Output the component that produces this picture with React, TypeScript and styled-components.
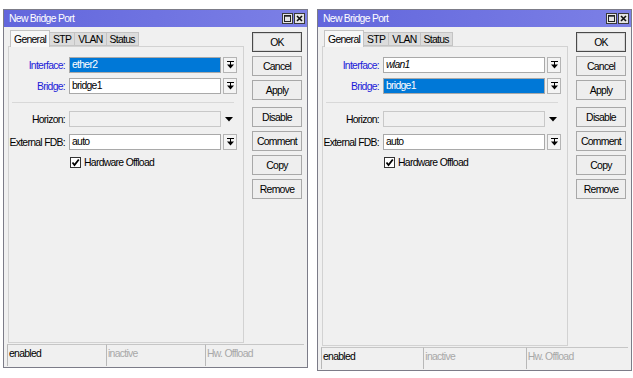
import React from 'react';
import styled, { createGlobalStyle } from 'styled-components';

const Global = createGlobalStyle`
  html, body { margin: 0; padding: 0; background: #ffffff; }
  body {
    font-family: "Liberation Sans", Arial, sans-serif;
    font-size: 10.4px;
    letter-spacing: -0.7px;
    color: #000;
  }
`;

const Page = styled.div`
  width: 633px;
  height: 378px;
  box-sizing: border-box;
  padding: 9px 0 0 3px;
  display: flex;
  align-items: flex-start;
  gap: 9px;
  overflow: hidden;
`;

const Win = styled.div<{ $w: number; $h: number }>`
  width: ${(p) => p.$w}px;
  height: ${(p) => p.$h}px;
  flex: none;
  box-sizing: border-box;
  border: 1px solid #7c7c88;
  background: #f0f0f0;
  display: flex;
  flex-direction: column;
`;

const TitleBar = styled.div`
  height: 17px;
  flex: none;
  display: flex;
  align-items: center;
  padding: 0 2px 0 5px;
  background: linear-gradient(to right, #6266dc, #7c80e6);
  color: #fff;
`;

const Title = styled.span`
  flex: 1;
`;

const TitleBtn = styled.span`
  width: 11px;
  height: 11px;
  box-sizing: border-box;
  border: 1px solid #3a3a3a;
  background: #e4e4e4;
  margin-left: 1px;
  display: flex;
  align-items: center;
  justify-content: center;
`;

const Body = styled.div`
  flex: 1;
  min-height: 0;
  display: flex;
  gap: 8px;
  padding: 3px 5px 0 4px;
`;

const Main = styled.div`
  flex: 1;
  display: flex;
  flex-direction: column;
`;

const Tabs = styled.div`
  height: 16px;
  flex: none;
  display: flex;
  align-items: flex-end;
  padding-left: 2px;
  position: relative;
  z-index: 1;
`;

const Tab = styled.div<{ $active?: boolean }>`
  height: ${(p) => (p.$active ? 17 : 14)}px;
  margin-bottom: ${(p) => (p.$active ? -1 : 0)}px;
  box-sizing: border-box;
  padding: 0 3px 0 3px;
  border: 1px solid #c4c4c4;
  border-bottom: ${(p) => (p.$active ? 'none' : '1px solid #c4c4c4')};
  margin-right: -1px;
  background: ${(p) => (p.$active ? '#f7f7f7' : '#dcdcdc')};
  display: flex;
  align-items: center;
`;

const Panel = styled.div`
  flex: 1;
  border: 1px solid #d2d2d2;
  background: #f0f0f0;
  padding: 10px 6px 0 0;
  display: flex;
  flex-direction: column;
`;

const Row = styled.div<{ $mt?: number }>`
  height: 16px;
  display: flex;
  align-items: center;
  margin-top: ${(p) => p.$mt ?? 0}px;
`;

const Label = styled.span<{ $blue?: boolean }>`
  width: 56px;
  flex: none;
  margin-right: 4px;
  display: flex;
  justify-content: flex-end;
  white-space: nowrap;
  color: ${(p) => (p.$blue ? '#1a1ad8' : '#000')};
`;

const Field = styled.div<{ $sel?: boolean; $disabled?: boolean; $italic?: boolean }>`
  flex: 1;
  height: 16px;
  box-sizing: border-box;
  border: 1px solid ${(p) => (p.$disabled ? '#c8c8c8' : '#a9a9a9')};
  background: ${(p) => (p.$sel ? '#0078d7' : p.$disabled ? '#f0f0f0' : '#ffffff')};
  color: ${(p) => (p.$sel ? '#fff' : '#000')};
  font-style: ${(p) => (p.$italic ? 'italic' : 'normal')};
  padding-left: 2px;
  line-height: 14px;
  white-space: nowrap;
`;

const DropBtn = styled.span`
  width: 14px;
  height: 16px;
  margin-left: 2px;
  box-sizing: border-box;
  border: 1px solid #b4b4b4;
  background: #f4f4f4;
  display: flex;
  align-items: center;
  justify-content: center;
  flex: none;
`;

const PlainArrow = styled.span`
  width: 16px;
  height: 16px;
  display: flex;
  align-items: center;
  justify-content: center;
  flex: none;
`;

const Sep = styled.div`
  height: 1px;
  background: #d8d8d8;
  margin: 8px 3px 8px 3px;
`;

const CheckRow = styled.label`
  display: flex;
  align-items: center;
  gap: 3px;
  margin: 6px 0 0 61px;
  height: 12px;
`;

const CheckBox = styled.span`
  width: 11px;
  height: 11px;
  box-sizing: border-box;
  border: 1px solid #333;
  background: #fff;
  display: flex;
  align-items: center;
  justify-content: center;
`;

const Side = styled.div`
  width: 50px;
  flex: none;
  display: flex;
  flex-direction: column;
  gap: 4px;
  padding-top: 2px;
`;

const Btn = styled.div<{ $default?: boolean; $mt?: number }>`
  height: 20px;
  box-sizing: border-box;
  border: 1px solid ${(p) => (p.$default ? '#4a4a4a' : '#a8a8a8')};
  box-shadow: ${(p) => (p.$default ? 'inset 0 0 0 1px #d6d6d6' : 'none')};
  background: #eeeeee;
  display: flex;
  align-items: center;
  justify-content: center;
  margin-top: ${(p) => p.$mt ?? 0}px;
`;

const StatusBar = styled.div`
  height: 22px;
  flex: none;
  margin: 1px 3px 1px 3px;
  display: flex;
`;

const StatusCell = styled.div<{ $muted?: boolean }>`
  flex: 1;
  border-top: 1px solid #c6c6c6;
  border-left: 1px solid #b8b8b8;
  padding: 3px 0 0 1px;
  color: ${(p) => (p.$muted ? '#a8a8a8' : '#000')};
  white-space: nowrap;
`;

const ComboIcon = () => (
  <svg width="7" height="8" viewBox="0 0 7 8">
    <rect x="0" y="0" width="7" height="1" fill="#000" />
    <rect x="3" y="1" width="1" height="3" fill="#000" />
    <polygon points="0,3.5 7,3.5 3.5,7.5" fill="#000" />
  </svg>
);

const DownIcon = () => (
  <svg width="8" height="5" viewBox="0 0 8 5">
    <polygon points="0,0 8,0 4,4.5" fill="#000" />
  </svg>
);

const CheckIcon = () => (
  <svg width="9" height="9" viewBox="0 0 9 9">
    <polyline points="1.5,4.5 3.5,7 7.8,1.5" fill="none" stroke="#000" strokeWidth="1.8" />
  </svg>
);

const MaxIcon = () => (
  <svg width="7" height="7" viewBox="0 0 7 7">
    <rect x="0.5" y="0.5" width="6" height="6" fill="none" stroke="#222" strokeWidth="1" />
    <rect x="0.5" y="0.5" width="6" height="1.2" fill="#222" />
  </svg>
);

const CloseIcon = () => (
  <svg width="7" height="7" viewBox="0 0 7 7">
    <path d="M1 1 L6 6 M6 1 L1 6" stroke="#111" strokeWidth="1.6" />
  </svg>
);

type WinProps = {
  w: number;
  h: number;
  iface: string;
  ifaceItalic?: boolean;
  selected: 'iface' | 'bridge';
};

const BridgeWindow = ({ w, h, iface, ifaceItalic, selected }: WinProps) => (
  <Win $w={w} $h={h}>
    <TitleBar>
      <Title>New Bridge Port</Title>
      <TitleBtn><MaxIcon /></TitleBtn>
      <TitleBtn><CloseIcon /></TitleBtn>
    </TitleBar>
    <Body>
      <Main>
        <Tabs>
          <Tab $active>General</Tab>
          <Tab>STP</Tab>
          <Tab>VLAN</Tab>
          <Tab>Status</Tab>
        </Tabs>
        <Panel>
          <Row>
            <Label $blue>Interface:</Label>
            <Field $sel={selected === 'iface'} $italic={ifaceItalic}>{iface}</Field>
            <DropBtn><ComboIcon /></DropBtn>
          </Row>
          <Row $mt={5}>
            <Label $blue>Bridge:</Label>
            <Field $sel={selected === 'bridge'}>bridge1</Field>
            <DropBtn><ComboIcon /></DropBtn>
          </Row>
          <Sep />
          <Row>
            <Label>Horizon:</Label>
            <Field $disabled />
            <PlainArrow><DownIcon /></PlainArrow>
          </Row>
          <Row $mt={7}>
            <Label>External FDB:</Label>
            <Field>auto</Field>
            <DropBtn><ComboIcon /></DropBtn>
          </Row>
          <CheckRow>
            <CheckBox><CheckIcon /></CheckBox>
            <span>Hardware Offload</span>
          </CheckRow>
        </Panel>
      </Main>
      <Side>
        <Btn $default>OK</Btn>
        <Btn>Cancel</Btn>
        <Btn>Apply</Btn>
        <Btn $mt={3}>Disable</Btn>
        <Btn>Comment</Btn>
        <Btn>Copy</Btn>
        <Btn>Remove</Btn>
      </Side>
    </Body>
    <StatusBar>
      <StatusCell>enabled</StatusCell>
      <StatusCell $muted>inactive</StatusCell>
      <StatusCell $muted>Hw. Offload</StatusCell>
    </StatusBar>
  </Win>
);

export default function App() {
  return (
    <>
      <Global />
      <Page>
        <BridgeWindow w={305} h={359} iface="ether2" selected="iface" />
        <BridgeWindow w={315} h={362} iface="wlan1" ifaceItalic selected="bridge" />
      </Page>
    </>
  );
}
